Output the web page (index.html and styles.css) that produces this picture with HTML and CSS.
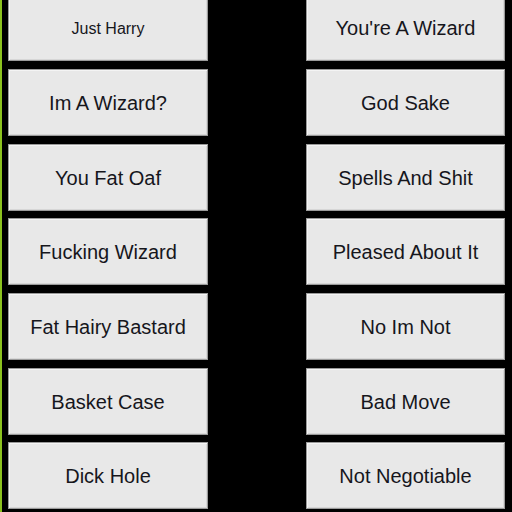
FILE: index.html
```html
<!DOCTYPE html>
<html>
<head>
<meta charset="utf-8">
<link rel="stylesheet" href="styles.css">
</head>
<body>
<div class="screen">
  <div class="stripe"></div>
  <div class="grid">
    <div class="col">
      <div class="btn small">Just Harry</div>
      <div class="btn">Im A Wizard?</div>
      <div class="btn">You Fat Oaf</div>
      <div class="btn">Fucking Wizard</div>
      <div class="btn">Fat Hairy Bastard</div>
      <div class="btn">Basket Case</div>
      <div class="btn">Dick Hole</div>
    </div>
    <div class="col">
      <div class="btn">You're A Wizard</div>
      <div class="btn">God Sake</div>
      <div class="btn">Spells And Shit</div>
      <div class="btn">Pleased About It</div>
      <div class="btn">No Im Not</div>
      <div class="btn">Bad Move</div>
      <div class="btn">Not Negotiable</div>
    </div>
  </div>
</div>
</body>
</html>
```
FILE: styles.css
```css
html, body {
  margin: 0;
  padding: 0;
  background: #000;
}
.screen {
  width: 512px;
  height: 512px;
  overflow: hidden;
  display: flex;
  background: #000;
}
.stripe {
  width: 2px;
  flex: none;
  background: #8cc21e;
}
.grid {
  display: flex;
  gap: 98px;
  padding-left: 6px;
  margin-top: -5.7px;
}
.col {
  display: flex;
  flex-direction: column;
  gap: 7.7px;
}
.col:first-child { width: 200px; }
.col:last-child { width: 199px; }
.btn {
  box-sizing: border-box;
  height: 67px;
  flex: none;
  padding-top: 2px;
  background: #e8e8e8;
  border: 1px solid #9a9a9a;
  box-shadow: inset 1px 1px 0 #f4f4f4, inset -1px -1px 0 #d6d6d6;
  display: flex;
  align-items: center;
  justify-content: center;
  font-family: "Liberation Sans", Arial, sans-serif;
  font-size: 20px;
  color: #16161c;
}
.btn.small {
  font-size: 16px;
}
```
